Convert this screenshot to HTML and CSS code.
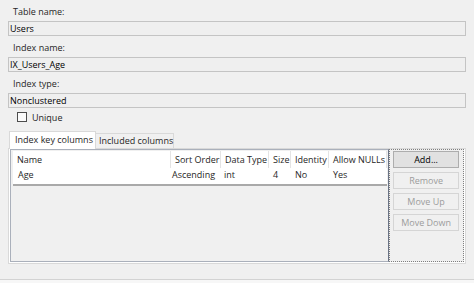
FILE: index.html
```html
<!DOCTYPE html>
<html>
<head>
<meta charset="utf-8">
<link rel="stylesheet" href="styles.css">
</head>
<body>
<div class="dlg">
  <div class="lbl">Table name:</div>
  <div class="box">Users</div>
  <div class="lbl">Index name:</div>
  <div class="box">IX_Users_Age</div>
  <div class="lbl">Index type:</div>
  <div class="box">Nonclustered</div>
  <div class="chk"><span class="cb"></span><span>Unique</span></div>
  <div class="tabs">
    <div class="tab active">Index key columns</div>
    <div class="tab">Included columns</div>
  </div>
  <div class="page">
    <div class="grid">
      <div class="row head">
        <div class="c c1">Name</div>
        <div class="c c2">Sort Order</div>
        <div class="c c3">Data Type</div>
        <div class="c c4">Size</div>
        <div class="c c5">Identity</div>
        <div class="c c6">Allow NULLs</div>
      </div>
      <div class="row data">
        <div class="c c1">Age</div>
        <div class="c c2">Ascending</div>
        <div class="c c3">int</div>
        <div class="c c4">4</div>
        <div class="c c5">No</div>
        <div class="c c6">Yes</div>
      </div>
    </div>
    <div class="btns">
      <div class="btn">Add...</div>
      <div class="btn off">Remove</div>
      <div class="btn off">Move Up</div>
      <div class="btn off">Move Down</div>
    </div>
  </div>
</div>
<div class="foot"></div>
</body>
</html>
```

FILE: styles.css
```css
html, body {
  margin: 0;
  padding: 0;
  background: #f0f0f0;
  width: 474px;
  height: 283px;
  overflow: hidden;
}
body {
  font-family: "Open Sans", "Noto Sans", sans-serif;
  font-size: 9px;
  color: #262626;
  white-space: nowrap;
}
.dlg {
  padding: 0 8px;
  display: flex;
  flex-direction: column;
}
.lbl {
  height: 21px;
  box-sizing: border-box;
  padding: 5px 0 0 5px;
  line-height: 13px;
}
.box {
  height: 15px;
  box-sizing: border-box;
  border: 1px solid #c4c4c4;
  line-height: 13px;
  padding-left: 1px;
  color: #000;
  background: #efefef;
}
.chk {
  height: 18px;
  display: flex;
  align-items: center;
  padding-left: 9px;
  gap: 5px;
}
.cb {
  width: 10px;
  height: 10px;
  box-sizing: border-box;
  border: 1px solid #4d4d4d;
  background: #fbfbfb;
}
.tabs {
  display: flex;
  align-items: flex-end;
  margin-top: 5px;
  padding-left: 1px;
  height: 17px;
  position: relative;
  z-index: 1;
}
.tab {
  box-sizing: border-box;
  height: 15px;
  line-height: 14px;
  border: 1px solid #d9d9d9;
  border-bottom: none;
  background: #f0f0f0;
  width: 79px;
  padding-left: 3px;
  margin-left: -1px;
}
.tab.active {
  width: 87px;
  background: #ffffff;
  line-height: 16px;
  padding-left: 5px;
  margin-left: 0;
  margin-bottom: -1px;
  height: 18px;
}
.page {
  box-sizing: border-box;
  height: 116px;
  border: 1px solid #d9d9d9;
  background: #ffffff;
  display: flex;
  padding: 0 1px 1px 1px;
}
.grid {
  width: 380px;
  box-sizing: border-box;
  border: 1px solid #aab0bb;
  border-right-color: #6a7385;
  background: #f0f0f0;
  display: flex;
  flex-direction: column;
  padding: 1px 0 0 2px;
}
.row {
  display: flex;
  background: #fff;
  width: 374px;
}
.row.head {
  height: 17px;
  line-height: 17px;
}
.row.data {
  height: 16px;
  line-height: 14px;
  border-bottom: 2px solid #a9a9a9;
}
.c {
  box-sizing: border-box;
  white-space: nowrap;
  overflow: hidden;
}
.head .c {
  border-right: 1px solid #e4e4e4;
  padding-left: 4px;
}
.data .c {
  padding-left: 5px;
}
.c1 { width: 158px; }
.c2 { width: 50px; }
.c3 { width: 48px; }
.c4 { width: 22px; }
.c5 { width: 38px; }
.c6 { width: 58px; }
.data .c2 { padding-left: 1px; }
.data .c3 { padding-left: 3px; }
.data .c4 { padding-left: 4px; }
.data .c5 { padding-left: 4px; }
.data .c6 { padding-left: 4px; }
.btns {
  width: 75px;
  box-sizing: border-box;
  border: 1px dotted #7f7f7f;
  background: #f0f0f0;
  padding: 1px 4px 0 3px;
  display: flex;
  flex-direction: column;
  gap: 4px;
}
.btn {
  height: 17px;
  box-sizing: border-box;
  border: 1px solid #adadad;
  background: #e1e1e1;
  text-align: center;
  line-height: 15px;
  color: #000;
}
.btn.off {
  border-color: #d5d5d5;
  background: #f0f0f0;
  color: #9c9c9c;
}
.foot {
  margin-top: 15px;
  height: 3px;
  border-top: 1px solid #d3d3d3;
  background: #f7f7f7;
}
```
